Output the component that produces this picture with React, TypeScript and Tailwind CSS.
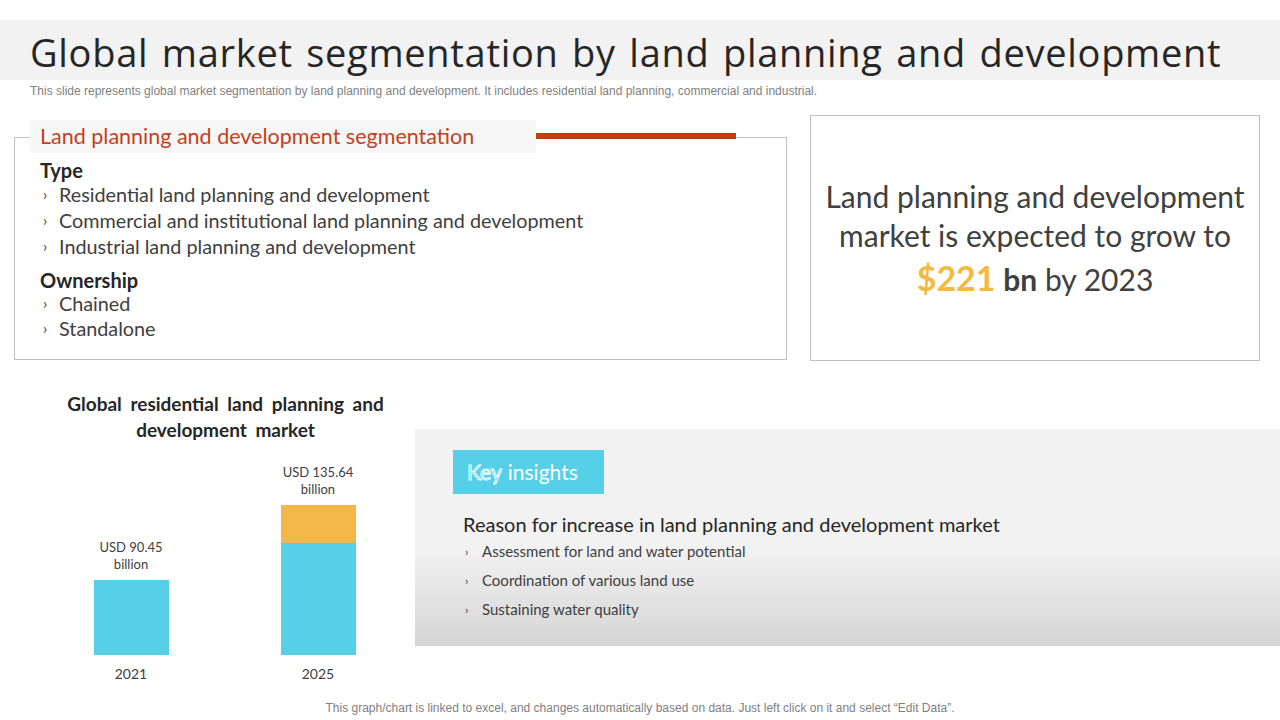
const typeItems = [
  'Residential land planning and development',
  'Commercial and institutional land planning and development',
  'Industrial land planning and development',
];

const ownershipItems = ['Chained', 'Standalone'];

const reasons = [
  'Assessment for land and water potential',
  'Coordination of various land use',
  'Sustaining water quality',
];

const Bullet = ({ children, className }: { children: React.ReactNode; className: string }) => (
  <div className={`flex items-center ${className}`}>
    <span className="w-[19px] pl-[3px] text-[15px]">›</span>
    <span>{children}</span>
  </div>
);

const App = () => {
  return (
    <div className="w-[1280px] h-[720px] overflow-hidden bg-white font-['Lato',sans-serif] text-[#404040]">
      {/* title */}
      <div className="mt-[20px] h-[60px] bg-[#f2f2f2] flex items-center pl-[30px] pt-[3px]">
        <h1 className="font-['Open_Sans',sans-serif] text-[38px] leading-none text-[#262626] tracking-[0.7px] [word-spacing:3px]">
          Global market segmentation by land planning and development
        </h1>
      </div>
      <div className="h-[22px] flex items-center pl-[30px]">
        <p className="font-['Liberation_Sans',sans-serif] text-[12px] text-[#7f7f7f]">
          This slide represents global market segmentation by land planning and development. It includes residential land planning, commercial and industrial.
        </p>
      </div>

      {/* top row */}
      <div className="mt-[13px] flex pl-[14px] gap-[23px]">
        <div className="mt-[22px] w-[773px] h-[223px] border border-[#bfbfbf] pl-[25px]">
          <div className="-mt-[18px] -ml-[10px] flex items-start">
            <div className="h-[33px] w-[506px] bg-[#f7f7f7] pl-[10px] flex items-center text-[21.5px] text-[#c5401b]">
              Land planning and development segmentation
            </div>
            <div className="mt-[13px] h-[6px] w-[200px] bg-[#c0410f]" />
          </div>
          <div className="mt-[6px] text-[20px] font-bold leading-[22px] text-[#262626]">Type</div>
          {typeItems.map((t) => (
            <Bullet key={t} className="text-[19.8px] leading-[26px] -mb-[0px]">
              {t}
            </Bullet>
          ))}
          <div className="mt-[10px] text-[20px] font-bold leading-[22px] text-[#262626]">Ownership</div>
          {ownershipItems.map((t) => (
            <Bullet key={t} className="text-[19.8px] leading-[25px]">
              {t}
            </Bullet>
          ))}
        </div>

        <div className="w-[450px] h-[246px] border border-[#bfbfbf] flex flex-col items-center justify-center text-center text-[30px] leading-[39px] text-[#404040] pt-[2px]">
          <div>Land planning and development</div>
          <div>market is expected to grow to</div>
          <div className="leading-[46px]">
            <span className="text-[34px] font-bold text-[#f4b942]">$221</span>{' '}
            <span className="font-bold">bn</span> by 2023
          </div>
        </div>
      </div>

      {/* bottom row */}
      <div className="flex h-[323px]">
        <div className="w-[415px] pl-[36px] pt-[30px]">
          <div className="text-center text-[19px] font-bold leading-[26px] text-[#262626] [word-spacing:4px]">
            Global residential land planning and
            <br />
            development market
          </div>
          <div className="h-[212px] flex items-end gap-[77px] pl-[40px]">
            <div className="w-[110px] flex flex-col items-center">
              <div className="text-[13px] leading-[17px] text-center">
                USD 90.45
                <br />
                billion
              </div>
              <div className="mt-[7px] w-[75px] h-[75px] bg-[#56d0e8]" />
            </div>
            <div className="w-[110px] flex flex-col items-center">
              <div className="text-[13px] leading-[17px] text-center">
                USD 135.64
                <br />
                billion
              </div>
              <div className="mt-[7px] w-[75px] h-[38px] bg-[#f4b84a]" />
              <div className="w-[75px] h-[112px] bg-[#56d0e8]" />
            </div>
          </div>
          <div className="mt-[9px] flex gap-[77px] pl-[40px] text-[14px] leading-[20px]">
            <div className="w-[110px] text-center">2021</div>
            <div className="w-[110px] text-center">2025</div>
          </div>
        </div>

        <div className="mt-[68px] w-[865px] h-[217px] bg-linear-to-b from-[#f2f2f2] from-[55%] to-[#d5d5d5] pl-[38px] pt-[21px]">
          <div className="w-[151px] h-[44px] bg-[#56d0e8] flex items-center pl-[14px] text-[21px] text-white">
            <span className="text-transparent [-webkit-text-stroke:1px_white]">Key</span>
            <span className="ml-[6px]">insights</span>
          </div>
          <div className="ml-[10px] mt-[17px] text-[20px] leading-[26px] text-[#262626]">
            Reason for increase in land planning and development market
          </div>
          <div className="ml-[10px]">
            {reasons.map((r) => (
              <div key={r} className="flex items-center text-[15px] leading-[29px]">
                <span className="w-[19px] pl-[2px] text-[12px]">›</span>
                <span>{r}</span>
              </div>
            ))}
          </div>
        </div>
      </div>

      <div className="mt-[17px] text-center font-['Liberation_Sans',sans-serif] text-[12px] leading-[14px] text-[#7f7f7f]">
        This graph/chart is linked to excel, and changes automatically based on data. Just left click on it and select “Edit Data”.
      </div>
    </div>
  );
};

export default App;
